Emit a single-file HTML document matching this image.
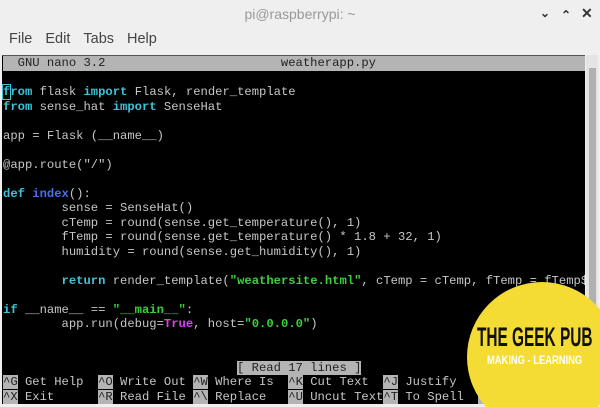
<!DOCTYPE html><html><head><style>
html,body{margin:0;width:600px;height:407px;overflow:hidden}
body{background:#efefef;font-family:"Liberation Sans",sans-serif;position:relative}
.title{position:absolute;top:0;left:0;width:600px;height:28px;text-align:center;line-height:28px;font-size:14px;color:#999}
.ctl{position:absolute;top:6px;font-size:12px;color:#333;font-weight:bold}
.menu{position:absolute;top:31px;left:9px;font-size:14.5px;color:#444}
.menu span{margin-right:13px}
.term{position:absolute;left:2px;top:55px;width:583px;height:348px;background:#000;border-top:1px solid #555;overflow:hidden}
pre{margin:0;font-family:"Liberation Mono",monospace;font-size:12.2px;line-height:14.5px;color:#c6c6c6;position:absolute;top:0;left:1px}
.hd{background:#b4b4b4;color:#222;display:inline-block;width:582px}
.k{color:#3cc4d8;font-weight:bold}.b{color:#4a6ee8;font-weight:bold}.g{color:#3ad03a;font-weight:bold}.m{color:#e040e8;font-weight:bold}
.s{background:#b4b4b4;color:#222}
.sb{position:absolute;left:586px;top:55px;width:12px;height:348px;background:#e4e4e4}
.th{position:absolute;left:589px;top:68px;width:7px;height:322px;background:#b0b0b0}
.clip{position:absolute;left:0;top:0;width:600px;height:407px;overflow:hidden}
.logo{position:absolute;left:467px;top:282px;width:150px;height:150px;border-radius:50%;background:#f5dc35}
.l1{position:absolute;left:477px;top:322px;font-weight:bold;font-size:27px;color:#111;transform:scaleX(.57);transform-origin:left;white-space:nowrap}
.l2{position:absolute;left:487px;top:353px;font-weight:bold;font-size:12px;color:#fff;transform:scaleX(.78);transform-origin:left;white-space:nowrap}
</style></head><body>
<div class="title">pi@raspberrypi: ~</div>
<div class="ctl" style="left:540px">&#8964;</div><div class="ctl" style="left:561px;top:8px">&#8963;</div><div class="ctl" style="left:581px;top:5px;font-size:14px">&#10005;</div>
<div class="menu"><span>File</span><span>Edit</span><span>Tabs</span><span>Help</span></div>
<div class="term"><pre><span class="hd">  GNU nano 3.2                        weatherapp.py                              </span>

<span class="k" style="outline:1px solid #3cc4d8">f</span><span class="k">rom</span> flask <span class="k">import</span> Flask, render_template
<span class="k">from</span> sense_hat <span class="k">import</span> SenseHat

app = Flask (__name__)

@app.route("/")

<span class="k">def</span> <span class="b">index</span>():
        sense = SenseHat()
        cTemp = round(sense.get_temperature(), 1)
        fTemp = round(sense.get_temperature() * 1.8 + 32, 1)
        humidity = round(sense.get_humidity(), 1)

        <span class="k">return</span> render_template(<span class="g">"weathersite.html"</span>, cTemp = cTemp, fTemp = fTemp$

<span class="k">if</span> __name__ == <span class="g">"__main__"</span>:
        app.run(debug=<span class="m">True</span>, host=<span class="g">"0.0.0.0"</span>)


                                <span class="s">[ Read 17 lines ]</span>
<span class="s">^G</span> Get Help  <span class="s">^O</span> Write Out <span class="s">^W</span> Where Is  <span class="s">^K</span> Cut Text  <span class="s">^J</span> Justify   <span class="s">^C</span> Cur Pos
<span class="s">^X</span> Exit      <span class="s">^R</span> Read File <span class="s">^\</span> Replace   <span class="s">^U</span> Uncut Text<span class="s">^T</span> To Spell  <span class="s">^_</span> Go To Line</pre></div>
<div class="sb"></div><div class="th"></div>
<div class="clip">
<div class="logo"></div>
<div class="l1">THE GEEK PUB</div>
<div class="l2">MAKING - LEARNING</div>
</div>
</body></html>
